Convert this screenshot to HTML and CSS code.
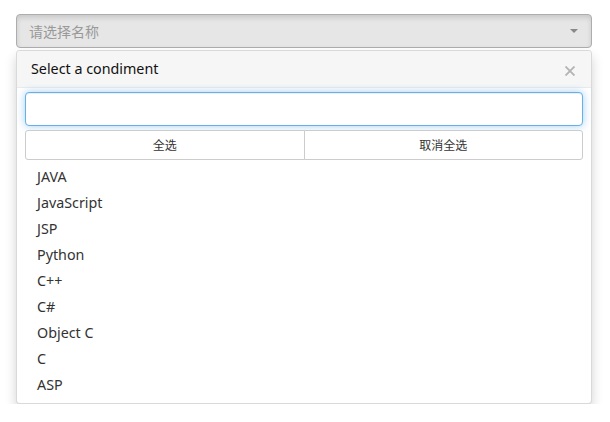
FILE: index.html
```html
<!DOCTYPE html>
<html lang="zh">
<head>
<meta charset="utf-8">
<title>Select</title>
<link rel="stylesheet" href="styles.css">
</head>
<body>
<div class="select">
  <button class="toggle" type="button">
    <span class="placeholder">请选择名称</span>
    <span class="caret"></span>
  </button>
  <div class="menu">
    <div class="menu-header">
      <span class="title">Select a condiment</span>
      <svg class="close" width="10" height="10" viewBox="0 0 10 10" aria-label="close"><path d="M0.5 0.5L9.5 9.5M9.5 0.5L0.5 9.5"/></svg>
    </div>
    <div class="searchbox"><input class="search" type="text"></div>
    <div class="actionsbox">
      <div class="btn-group">
        <button class="btn" type="button">全选</button>
        <button class="btn" type="button">取消全选</button>
      </div>
    </div>
    <ul class="options">
      <li>JAVA</li>
      <li>JavaScript</li>
      <li>JSP</li>
      <li>Python</li>
      <li>C++</li>
      <li>C#</li>
      <li>Object C</li>
      <li>C</li>
      <li>ASP</li>
    </ul>
  </div>
</div>
</body>
</html>
```
FILE: styles.css
```css
* { box-sizing: border-box; }
html, body { background: #fff; }
body {
  margin: 0;
  padding: 14px 18px 0 16px;
  font-family: "Noto Sans", "Noto Sans CJK SC", sans-serif;
  font-size: 14px;
  line-height: 20px;
  color: #333;
}
.select { width: 576px; }
.toggle {
  display: flex;
  align-items: center;
  justify-content: space-between;
  width: 100%;
  height: 34px;
  padding: 6px 12px;
  margin: 0;
  background: #e6e6e6;
  border: 1px solid #adadad;
  border-radius: 4px;
  box-shadow: inset 0 3px 5px rgba(0,0,0,.125);
  font: inherit;
  text-align: left;
}
.placeholder { color: #999; font-family: "Noto Sans CJK SC", sans-serif; }
.caret {
  width: 0; height: 0;
  border-top: 4px solid #888;
  border-left: 4px solid transparent;
  border-right: 4px solid transparent;
  margin-right: 1px;
}
.menu {
  margin-top: 2px;
  background: #fff;
  border: 1px solid rgba(0,0,0,.15);
  border-radius: 4px;
  box-shadow: 0 6px 12px rgba(0,0,0,.175);
  padding-bottom: 5px;
}
.menu-header {
  display: flex;
  justify-content: space-between;
  align-items: center;
  height: 37px;
  padding: 8px 14px;
  background: #f6f6f6;
  border-bottom: 1px solid #ebebeb;
  border-radius: 3px 3px 0 0;
  color: #111;
}
.title { font-size: 14.3px; }
.close {
  display: block;
  margin-right: 2px;
  margin-top: 4px;
  stroke: #b3b3b3;
  stroke-width: 1.8;
  fill: none;
}
.searchbox { padding: 4px 8px; }
.search {
  display: block;
  width: 100%;
  height: 34px;
  border: 1px solid #66afe9;
  border-radius: 4px;
  outline: 0;
  box-shadow: inset 0 1px 1px rgba(0,0,0,.075), 0 0 8px rgba(102,175,233,.6);
}
.actionsbox { padding: 0 8px 4px; }
.btn-group { display: flex; }
.btn {
  flex: 1 1 50%;
  height: 30px;
  margin: 0;
  padding: 5px 10px;
  background: #fff;
  border: 1px solid #ccc;
  font-family: "Noto Sans CJK SC", sans-serif;
  font-size: 12px;
  line-height: 18px;
  color: #333;
}
.btn:first-child { border-radius: 3px 0 0 3px; }
.btn:last-child { border-radius: 0 3px 3px 0; margin-left: -1px; }
.options { list-style: none; margin: 0; padding: 0; }
.options li {
  padding: 3px 20px;
  line-height: 20px;
  font-size: 14.3px;
  color: #333;
}
```
